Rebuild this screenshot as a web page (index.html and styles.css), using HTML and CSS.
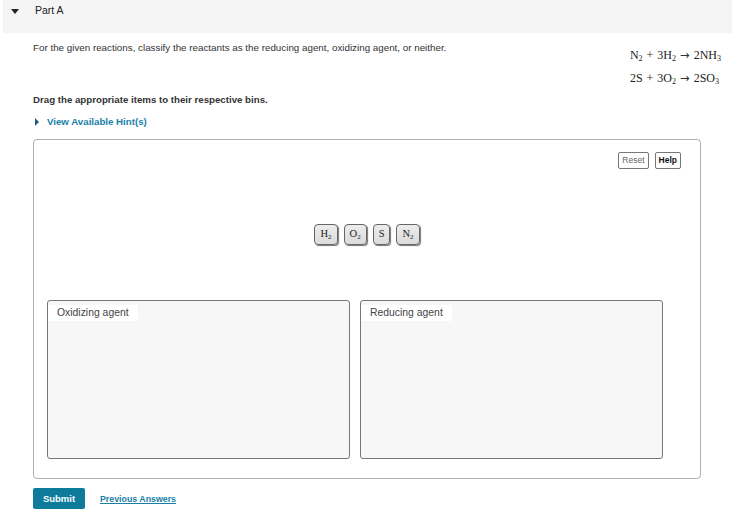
FILE: index.html
```html
<!DOCTYPE html>
<html>
<head>
<meta charset="utf-8">
<link rel="stylesheet" href="styles.css">
</head>
<body>
<div class="part-header">
  <span class="caret-down"></span>
  <span class="part-title">Part A</span>
</div>
<div class="content">
  <div class="intro-row">
    <p class="intro">For the given reactions, classify the reactants as the reducing agent, oxidizing agent, or neither.</p>
    <div class="eqs">
      <div class="eq">N<sub>2</sub><span class="op">+</span>3H<sub>2</sub><span class="arr">→</span>2NH<sub>3</sub></div>
      <div class="eq">2S<span class="op">+</span>3O<sub>2</sub><span class="arr">→</span>2SO<sub>3</sub></div>
    </div>
  </div>
  <p class="drag">Drag the appropriate items to their respective bins.</p>
  <div class="hint"><span class="caret-right"></span>View Available Hint(s)</div>
  <div class="board">
    <div class="tools">
      <span class="btn reset">Reset</span>
      <span class="btn help">Help</span>
    </div>
    <div class="tiles">
      <span class="tile">H<sub>2</sub></span>
      <span class="tile">O<sub>2</sub></span>
      <span class="tile">S</span>
      <span class="tile">N<sub>2</sub></span>
    </div>
    <div class="bins">
      <div class="bin"><span class="bin-label">Oxidizing agent</span></div>
      <div class="bin"><span class="bin-label">Reducing agent</span></div>
    </div>
  </div>
  <div class="actions">
    <span class="submit">Submit</span>
    <a class="prev">Previous Answers</a>
  </div>
</div>
</body>
</html>
```
FILE: styles.css
```css
html, body { margin: 0; padding: 0; background: #fff; }
body { font-family: "Liberation Sans", Arial, sans-serif; color: #222; width: 732px; height: 512px; overflow: hidden; }
.part-header {
  margin-left: 3px;
  height: 33px;
  background: #f5f5f5;
  display: flex;
  align-items: flex-start;
  padding-top: 4px;
  box-sizing: border-box;
}
.caret-down {
  width: 0; height: 0;
  border-left: 4px solid transparent;
  border-right: 4px solid transparent;
  border-top: 5px solid #222;
  margin: 5px 0 0 8px;
}
.part-title { font-size: 10.5px; margin-left: 16px; color: #222; }
.content { padding-left: 33px; padding-right: 11px; }
.intro-row { display: flex; justify-content: space-between; margin-top: 9px; }
.intro { font-size: 9.8px; color: #333; margin: 0; padding-top: 0; }
.eqs { font-family: "Liberation Serif", "Times New Roman", serif; font-size: 12px; color: #222; margin-top: 6px; }
.eq { height: 23px; line-height: 15px; white-space: nowrap; }
.op { margin: 0 4px; }
.arr { font-family: "DejaVu Sans", sans-serif; font-size: 11.5px; margin: 0 4px; color: #333; }
.eq sub { font-size: 8px; vertical-align: -2px; line-height: 0; }
.tile sub { font-size: 7px; vertical-align: -2px; line-height: 0; }
.drag { font-size: 9.7px; font-weight: bold; color: #333; margin: 0; }
.hint { font-size: 9.7px; font-weight: bold; color: #1a7fa8; margin-top: 11px; display: flex; align-items: center; }
.caret-right {
  width: 0; height: 0;
  border-top: 4px solid transparent;
  border-bottom: 4px solid transparent;
  border-left: 4px solid #1a5f84;
  margin: 0 8px 0 2px;
}
.board {
  margin-top: 12px;
  width: 668px;
  height: 340px;
  box-sizing: border-box;
  border: 1px solid #b0b0b0;
  border-radius: 4px;
  padding: 12px 13px 0 13px;
  display: flex;
  flex-direction: column;
}
.tools { display: flex; justify-content: flex-end; gap: 6px; padding-right: 6px; }
.btn {
  font-size: 8.5px;
  border: 1px solid #777;
  border-radius: 2px;
  padding: 3px 3px;
  line-height: 9px;
  background: #fff;
}
.reset { color: #666; }
.help { color: #111; font-weight: bold; }
.tiles { display: flex; justify-content: center; gap: 6px; margin-top: 55px; margin-left: 0; }
.tile {
  font-family: "Liberation Serif", "Times New Roman", serif;
  font-size: 10.5px;
  color: #222;
  background: linear-gradient(#ececec, #dcdcdc);
  border: 1px solid #666;
  border-radius: 4px;
  box-shadow: 1px 1px 1px #777;
  padding: 0 5px;
  height: 19px;
  line-height: 18px;
}
.bins { display: flex; gap: 10px; margin-top: 55px; }
.bin {
  width: 303px;
  height: 159px;
  box-sizing: border-box;
  border: 1px solid #777;
  border-radius: 3px;
  background: #f7f7f7;
  padding-top: 1px;
}
.bin-label {
  display: inline-block;
  background: #fff;
  font-size: 10.4px;
  color: #444;
  padding: 2px 9px 3px 9px;
}
.actions { display: flex; align-items: center; margin-top: 9px; }
.submit {
  background: #0e7a9c;
  color: #fff;
  font-weight: bold;
  font-size: 9.5px;
  width: 52px;
  height: 21px;
  line-height: 21px;
  text-align: center;
  border-radius: 2px;
}
.prev { font-size: 8.8px; font-weight: bold; color: #1a7fa8; text-decoration: underline; margin-left: 15px; }
```
